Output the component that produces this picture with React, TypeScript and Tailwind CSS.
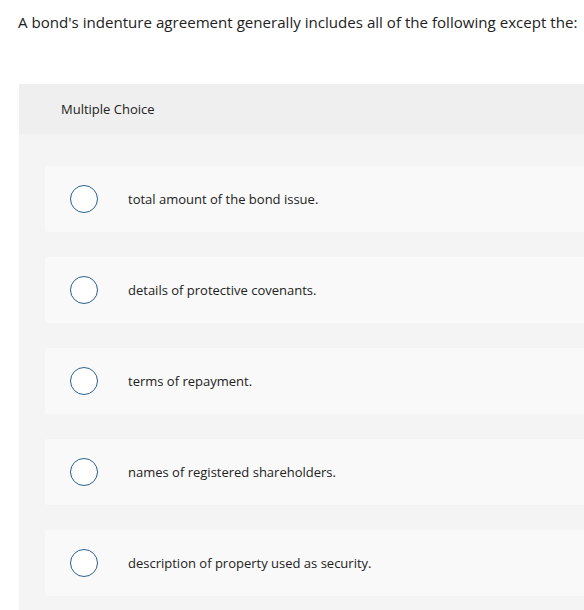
import React from "react";

const options = [
  "total amount of the bond issue.",
  "details of protective covenants.",
  "terms of repayment.",
  "names of registered shareholders.",
  "description of property used as security.",
];

export default function App() {
  return (
    <div
      className="w-[584px] h-[610px] overflow-hidden bg-white text-[#222]"
      style={{ fontFamily: "'Open Sans', sans-serif" }}
    >
      <div className="pl-[18px] pt-[11px] text-[15.1px] leading-[22px] whitespace-nowrap">
        A bond's indenture agreement generally includes all of the following except the:
      </div>
      <div className="ml-[19px] mt-[51px] w-[620px]">
        <div className="h-[50px] bg-[#efefef] flex items-center pl-[42px] pt-[2px] text-[13px] text-[#222]">
          Multiple Choice
        </div>
        <div className="bg-[#f4f4f4] pt-[32px] pl-[26px] flex flex-col gap-[25px] pb-[20px]">
          {options.map((o) => (
            <div key={o} className="h-[66px] bg-[#f9f9f9] rounded-[3px] flex items-center">
              <div className="ml-[25px] w-[28px] h-[28px] rounded-full border-[1.5px] border-[#2a5f8f] bg-white" />
              <div className="ml-[30px] pt-[2px] text-[13px] text-[#222]">{o}</div>
            </div>
          ))}
        </div>
      </div>
    </div>
  );
}
